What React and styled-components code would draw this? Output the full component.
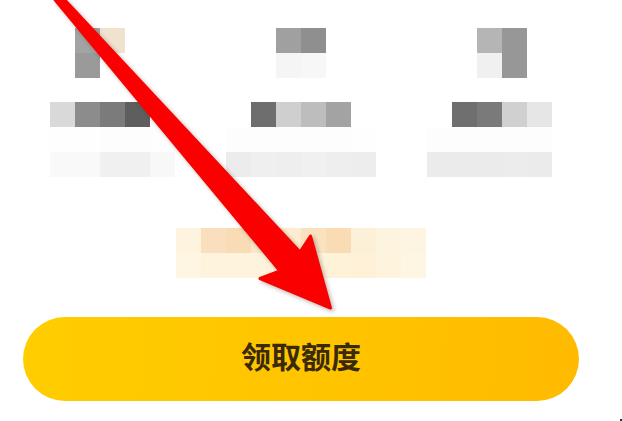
import React from "react";
import styled, { createGlobalStyle } from "styled-components";

const Global = createGlobalStyle`
  html, body { margin: 0; padding: 0; background: #fff; }
  body { width: 622px; height: 421px; overflow: hidden; }
`;

const Page = styled.main`
  position: relative;
  width: 622px;
  height: 421px;
  box-sizing: border-box;
  padding-top: 28px;
  background: #fff;
  overflow: hidden;
  font-family: "Noto Sans CJK SC", "Liberation Sans", sans-serif;
`;

const Features = styled.section`
  display: grid;
  grid-template-columns: repeat(3, 200px);
  column-gap: 0.75px;
  filter: blur(0.5px);
`;

const Feature = styled.div`
  display: flex;
  flex-direction: column;
`;

const TileRow = styled.div`
  display: grid;
  grid-template-columns: repeat(8, 25px);
  height: 24.8px;
`;

const Tile = styled.span`
  background: ${(p) => p.$color || "transparent"};
`;

const Banner = styled.div`
  display: grid;
  grid-template-columns: repeat(10, 25px);
  grid-auto-rows: 25px;
  width: 250px;
  margin: 51px 0 0 176px;
  filter: blur(0.5px);
`;

const ClaimButton = styled.button`
  display: flex;
  align-items: center;
  justify-content: center;
  width: 556px;
  height: 84px;
  margin: 39px 0 0 23px;
  padding: 0 0 7px;
  border: 0;
  border-radius: 42px;
  background: linear-gradient(95deg, #ffcd00 0%, #ffc500 50%, #ffba00 100%);
  color: #3a2a08;
  font-family: inherit;
  font-size: 30px;
  font-weight: 700;
  line-height: 1;
`;

const Arrow = styled.svg`
  position: absolute;
  left: 0;
  top: 0;
  width: 622px;
  height: 421px;
  pointer-events: none;
  filter: drop-shadow(2px 2px 2px rgba(70, 40, 30, 0.35));
`;

const Speck = styled.i`
  position: absolute;
  right: 0;
  bottom: 0;
  width: 2px;
  height: 2px;
  background: #333;
`;

const _ = null;
const features = [
  [
    [_, _, _, "#a3a3a3", "#f0e2cf", _, _, _],
    [_, _, _, "#9a9a9a", _, _, _, _],
    [],
    [_, _, "#d9d9d9", "#8c8c8c", "#7b7b7b", "#5e5e5e", _, _],
    [_, _, "#fefefe", "#fefefe", "#fdfdfd", "#fdfdfd", "#fefefe", _],
    [_, _, "#f9f9f9", "#f9f9f9", "#f0f0f0", "#f0f0f0", "#f8f8f8", _],
  ],
  [
    [_, _, _, "#a0a0a0", "#8f8f8f", _, _, _],
    [_, _, _, "#f5f5f5", "#f7f7f7", _, _, _],
    [],
    [_, _, "#6e6e6e", "#cfcfcf", "#bdbdbd", "#a3a3a3", _, _],
    [_, "#fdfdfd", "#fdfdfd", "#fdfdfd", "#fdfdfd", "#fdfdfd", "#fefefe", _],
    [_, "#ececec", "#efefef", "#eeeeee", "#f0f0f0", "#eeeeee", "#ededed", _],
  ],
  [
    [_, _, _, "#b5b5b5", "#979797", _, _, _],
    [_, _, _, "#f0f0f0", "#979797", _, _, _],
    [],
    [_, _, "#6f6f6f", "#7a7a7a", "#d0d0d0", "#e6e6e6", _, _],
    [_, "#fdfdfd", "#fdfdfd", "#fdfdfd", "#fdfdfd", "#fdfdfd", _, _],
    [_, "#ebebeb", "#ebebeb", "#ebebeb", "#ececec", "#ebebeb", _, _],
  ],
];

const banner = [
  "#fdf3df", "#f9dfbd", "#f9dcb5", "#fbe6c8", "#fdeccf", "#fae2c0", "#f9dcb4", "#fdf0d8", "#fdf4e0", "#fdf5e2",
  "#fef5e2", "#fef3dc", "#fef4de", "#fef3dc", "#fef2da", "#fef3dc", "#fef2d9", "#fef1d7", "#fef3dc", "#fef5e2",
];

export default function App() {
  return (
    <Page>
      <Global />
      <Features>
        {features.map((rows, i) => (
          <Feature key={i}>
            {rows.map((row, j) => (
              <TileRow key={j}>
                {row.map((color, k) => (
                  <Tile key={k} $color={color} />
                ))}
              </TileRow>
            ))}
          </Feature>
        ))}
      </Features>
      <Banner>
        {banner.map((color, i) => (
          <Tile key={i} $color={color} />
        ))}
      </Banner>
      <ClaimButton>领取额度</ClaimButton>
      <Arrow viewBox="0 0 622 421">
        <path
          d="M53.5 -2 L63 -2 L300 252 L310.5 236 L330.5 308 L260 278.5 L280 271 Z"
          fill="#fb0000"
          stroke="#fb0000"
          strokeWidth="3"
          strokeLinejoin="round"
        />
      </Arrow>
      <Speck />
    </Page>
  );
}
